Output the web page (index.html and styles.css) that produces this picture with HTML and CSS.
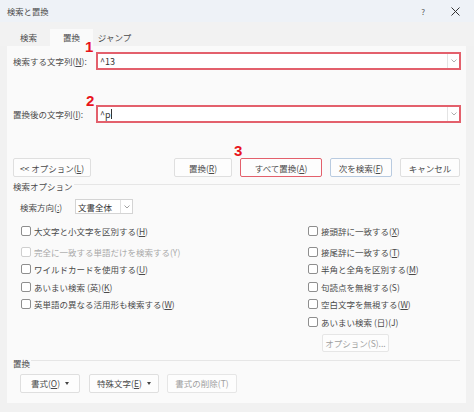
FILE: index.html
```html
<!DOCTYPE html>
<html lang="ja">
<head>
<meta charset="utf-8">
<title>検索と置換</title>
<link rel="stylesheet" href="styles.css">
</head>
<body>
<div class="dialog">
  <div class="titlebar">
    <span class="title">検索と置換</span>
    <span class="help">?</span>
    <svg class="close" width="9" height="9" viewBox="0 0 9 9"><path d="M0.5 0.5L8.5 8.5M8.5 0.5L0.5 8.5" stroke="#333" stroke-width="1"/></svg>
  </div>
  <div class="tabs">
    <div class="tab">検索</div>
    <div class="tab active">置換</div>
    <div class="tab">ジャンプ</div>
  </div>
  <div class="panel">
    <div class="field-row first">
      <span class="anno anno1">1</span>
      <label class="field-label">検索する文字列(<u>N</u>):</label>
      <div class="combo hl">
        <span class="combo-text">^13</span>
        <span class="combo-arrow"><svg width="6" height="4" viewBox="0 0 6 4"><path d="M0.5 0.5L3 3L5.5 0.5" fill="none" stroke="#999" stroke-width="0.8"/></svg></span>
      </div>
    </div>
    <div class="field-row second">
      <span class="anno anno2">2</span>
      <label class="field-label">置換後の文字列(<u>I</u>):</label>
      <div class="combo hl">
        <span class="combo-text">^p<span class="caret"></span></span>
        <span class="combo-arrow"><svg width="6" height="4" viewBox="0 0 6 4"><path d="M0.5 0.5L3 3L5.5 0.5" fill="none" stroke="#999" stroke-width="0.8"/></svg></span>
      </div>
    </div>
    <div class="button-row">
      <button class="btn w-opt">&lt;&lt; オプション(<u>L</u>)</button>
      <div class="right-buttons">
        <button class="btn w-rep">置換(<u>R</u>)</button>
        <button class="btn w-all hl-btn"><span class="anno anno3">3</span>すべて置換(<u>A</u>)</button>
        <button class="btn w-next focus">次を検索(<u>F</u>)</button>
        <button class="btn w-cancel">キャンセル</button>
      </div>
    </div>
    <div class="group-head g1">
      <span>検索オプション</span>
      <span class="rule"></span>
    </div>
    <div class="dir-row">
      <span class="dir-label">検索方向(<u>:</u>)</span>
      <div class="select">
        <span class="select-text">文書全体</span>
        <span class="select-arrow"><svg width="6" height="4" viewBox="0 0 6 4"><path d="M0.5 0.5L3 3L5.5 0.5" fill="none" stroke="#888" stroke-width="0.8"/></svg></span>
      </div>
    </div>
    <div class="options">
      <div class="col left">
        <div class="cb-row r1"><span class="cb"></span>大文字と小文字を区別する(<u>H</u>)</div>
        <div class="cb-row disabled"><span class="cb"></span>完全に一致する単語だけを検索する(Y)</div>
        <div class="cb-row"><span class="cb"></span>ワイルドカードを使用する(<u>U</u>)</div>
        <div class="cb-row"><span class="cb"></span>あいまい検索 (英)(<u>K</u>)</div>
        <div class="cb-row"><span class="cb"></span>英単語の異なる活用形も検索する(<u>W</u>)</div>
      </div>
      <div class="col right">
        <div class="cb-row r1"><span class="cb"></span>接頭辞に一致する(<u>X</u>)</div>
        <div class="cb-row"><span class="cb"></span>接尾辞に一致する(<u>T</u>)</div>
        <div class="cb-row"><span class="cb"></span>半角と全角を区別する(<u>M</u>)</div>
        <div class="cb-row"><span class="cb"></span>句読点を無視する(S)</div>
        <div class="cb-row"><span class="cb"></span>空白文字を無視する(<u>W</u>)</div>
        <div class="cb-row"><span class="cb"></span>あいまい検索 (日)(J)</div>
        <button class="btn small disabled-btn">オプション(S)...</button>
      </div>
    </div>
    <div class="group-head g2">
      <span>置換</span>
      <span class="rule"></span>
    </div>
    <div class="bottom-row">
      <button class="btn w-fmt">書式(<u>O</u>)<span class="tri"></span></button>
      <button class="btn w-spec">特殊文字(<u>E</u>)<span class="tri"></span></button>
      <button class="btn w-del disabled-btn">書式の削除(T)</button>
    </div>
  </div>
</div>
</body>
</html>
```

FILE: styles.css
```css
* { box-sizing: border-box; }
html, body {
  margin: 0;
  padding: 0;
}
body {
  width: 474px;
  height: 412px;
  overflow: hidden;
  background: #f0f0f0;
  font-family: "Noto Sans CJK JP", "Noto Sans", sans-serif;
  font-size: 8.5px;
  color: #4a4a4a;
}
u { text-decoration: underline; text-underline-offset: 1px; }
.dialog {
  width: 474px;
  height: 412px;
  background: #f1f1f1;
}
.titlebar {
  height: 22px;
  background: #eef2f7;
  display: flex;
  align-items: center;
  padding: 0 14px 0 7px;
  font-size: 8.3px;
}
.title { flex: 1; }
.help { font-size: 8px; color: #555; margin-right: 26px; }
.close { display: block; }
.tabs {
  height: 24px;
  display: flex;
  align-items: flex-end;
  padding-left: 7px;
  background: #f2f2f2;
}
.tab {
  width: 43px;
  height: 17px;
  display: flex;
  align-items: center;
  justify-content: center;
  padding-bottom: 1px;
}
.tab.active { background: #fafafa; }
.panel {
  margin-left: 7px;
  width: 459px;
  height: 357px;
  background: #fafafa;
  padding: 6px 6px 0 6px;
}
.field-row {
  position: relative;
  display: flex;
  align-items: center;
  height: 18px;
}
.field-row.second { margin-top: 35px; }
.field-label { width: 83px; flex: none; }
.combo {
  flex: 1;
  height: 18px;
  margin-right: -1px;
  background: #fff;
  display: flex;
  align-items: stretch;
}
.combo.hl { border: 2px solid #e3606c; }
.combo-text {
  flex: 1;
  display: flex;
  align-items: center;
  padding-left: 2px;
  font-size: 9px;
  color: #333;
}
.caret {
  display: inline-block;
  width: 1px;
  height: 10px;
  background: #333;
}
.combo-arrow {
  width: 12px;
  border-left: 1px solid #e4e4e4;
  display: flex;
  align-items: center;
  justify-content: center;
}
.anno {
  position: absolute;
  font-family: "Liberation Sans", Arial, sans-serif;
  font-weight: bold;
  font-size: 15px;
  color: #e8141c;
  line-height: 1;
}
.anno1 { left: 72px; top: -13px; }
.anno2 { left: 73px; top: -12px; }
.anno3 { left: -7px; top: -16px; }
.button-row {
  display: flex;
  margin-top: 35px;
  height: 19px;
}
.right-buttons {
  margin-left: auto;
  display: flex;
  gap: 8px;
}
.btn {
  position: relative;
  height: 19px;
  padding: 0;
  margin: 0;
  font-family: inherit;
  font-size: 8.5px;
  color: #4a4a4a;
  background: #fdfdfd;
  border: 1px solid #dfdfdf;
  border-radius: 2px;
  display: flex;
  align-items: center;
  justify-content: center;
}
.w-opt { width: 78px; }
.w-rep { width: 58px; }
.w-all { width: 82px; }
.w-next { width: 62px; }
.w-cancel { width: 60px; }
.hl-btn { border: 1.5px solid #e3606c; }
.focus { border-color: #b9cbe0; }
.group-head {
  display: flex;
  align-items: center;
  height: 12px;
}
.group-head .rule {
  flex: 1;
  height: 1px;
  background: #e6e6e6;
  margin-left: 1px;
  margin-top: -4px;
}
.g1 { margin-top: 3px; }
.dir-row {
  display: flex;
  align-items: center;
  margin-top: 7px;
  padding-left: 7px;
  height: 15px;
}
.dir-label { width: 55px; }
.select {
  width: 58px;
  height: 15px;
  border: 1px solid #d4d4d4;
  background: #fff;
  display: flex;
}
.select-text {
  flex: 1;
  display: flex;
  align-items: center;
  padding-left: 2px;
  color: #333;
}
.select-arrow {
  width: 12px;
  border-left: 1px solid #e0e0e0;
  display: flex;
  align-items: center;
  justify-content: center;
}
.options {
  display: flex;
  margin-top: 8px;
}
.col { display: flex; flex-direction: column; }
.col.left { width: 295px; padding-left: 8px; }
.col.right { flex: 1; }
.cb-row {
  display: flex;
  align-items: center;
  height: 17.5px;
  white-space: nowrap;
}
.cb-row.r1 { height: 17px; margin-bottom: 4px; }
.cb {
  width: 10px;
  height: 10px;
  border: 1px solid #8e8e8e;
  border-radius: 2px;
  background: #fff;
  margin-right: 3px;
  flex: none;
}
.disabled { color: #a9a9a9; }
.disabled .cb { border-color: #cfcfcf; }
.btn.small {
  width: 67px;
  height: 18px;
  margin-left: 14px;
  margin-top: 3px;
}
.disabled-btn { color: #a0a0a0; border-color: #e6e6e6; }
.g2 { margin-top: 5px; }
.bottom-row {
  display: flex;
  gap: 8px;
  margin-top: 5px;
  padding-left: 7px;
}
.w-fmt { width: 60px; }
.w-spec { width: 70px; margin-left: 1px; }
.w-del { width: 70px; }
.tri {
  display: inline-block;
  width: 0;
  height: 0;
  border-left: 2px solid transparent;
  border-right: 2px solid transparent;
  border-top: 3px solid #444;
  margin-left: 5px;
}
```
